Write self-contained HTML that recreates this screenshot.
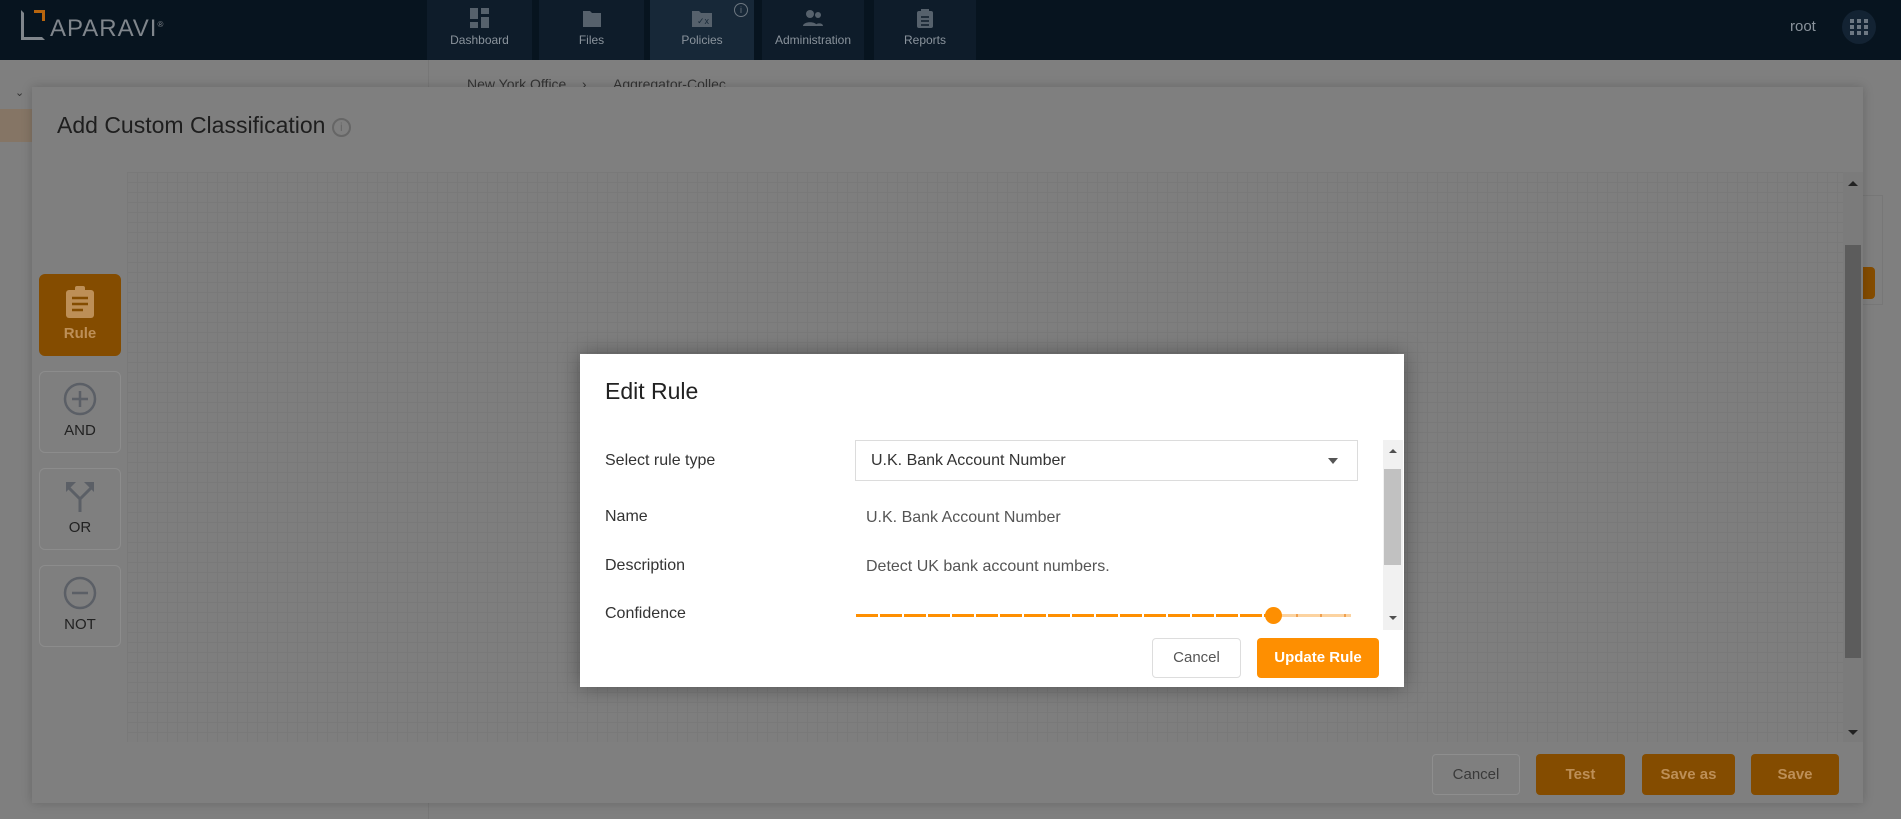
<!DOCTYPE html>
<html><head><meta charset="utf-8"><style>
*{box-sizing:border-box;margin:0;padding:0}
body{width:1901px;height:819px;overflow:hidden;position:relative;font-family:"Liberation Sans",sans-serif;background:#7f7f7f}
.abs{position:absolute}
.top{left:0;top:0;width:1901px;height:60px;background:#07141f}
.nav{top:0;height:60px;color:#8a939c;font-size:12px;text-align:center;background:#0e1c2a}
.nav svg{display:block;margin:8px auto 5px}
.grid{background-color:#7e7e7e;background-image:linear-gradient(#797979 1px,transparent 1px),linear-gradient(90deg,#797979 1px,transparent 1px);background-size:10px 10px}
.tb{left:39px;width:82px;height:82px;border:1px solid #8c8c8c;border-radius:6px;background:#7f7f7f;text-align:center;font-size:15px;color:#222}
.tb svg{display:block;margin:10px auto 6px}
.ob{background:#844c00;border-radius:4px;text-align:center;font-weight:bold;font-size:15px;line-height:41px;color:#bd8f57}
.lbl{left:605px;font-size:16px;color:#333;transform:translateY(-50%)}
.val{left:866px;font-size:16px;color:#555;transform:translateY(-50%)}
</style></head><body>
<div class="abs top"></div>
<div class="abs" style="left:21px;top:10px;width:24px;height:30px;border:3px solid #80868c;border-right-color:transparent;border-top-color:transparent"></div>
<div class="abs" style="left:34px;top:10px;width:11px;height:11px;border-top:3px solid #b8650e;border-right:3px solid #b8650e"></div>
<div class="abs" style="left:50px;top:15px;color:#80868c;font-size:24px;letter-spacing:1px">APARAVI<sup style="font-size:8px">®</sup></div>
<div class="abs nav" style="left:427px;width:105px"><svg width="20" height="20"><rect x="0" y="0" width="8" height="11" fill="#56616c"/><rect x="11" y="0" width="8" height="6" fill="#56616c"/><rect x="11" y="9" width="8" height="11" fill="#56616c"/><rect x="0" y="14" width="8" height="6" fill="#56616c"/></svg>Dashboard</div>
<div class="abs nav" style="left:539px;width:105px"><svg width="20" height="20"><path d="M1 3h7l2 2h9v14H1z" fill="#56616c"/></svg>Files</div>
<div class="abs nav" style="left:650px;width:104px;background:#172838"><svg width="22" height="20"><path d="M1 3h7l2 2h11v14H1z" fill="#56616c"/><text x="6" y="16" font-size="9" fill="#172838" font-family="Liberation Sans">✓x</text></svg>Policies</div>
<div class="abs" style="left:734px;top:3px;width:14px;height:14px;border:1px solid #6d7780;border-radius:50%;color:#6d7780;font-size:9px;text-align:center;line-height:12px">i</div>
<div class="abs nav" style="left:762px;width:102px"><svg width="22" height="20"><circle cx="8" cy="6" r="4" fill="#56616c"/><circle cx="16" cy="7" r="3" fill="#56616c"/><path d="M1 18c0-5 14-5 14 0zM13 18c0-3 8-4 8 0z" fill="#56616c"/></svg>Administration</div>
<div class="abs nav" style="left:874px;width:102px"><svg width="20" height="20"><rect x="2" y="3" width="16" height="17" rx="2" fill="#56616c"/><rect x="6" y="1" width="8" height="4" fill="#56616c"/><path d="M6 9h8M6 13h8M6 17h8" stroke="#0e1c2a" stroke-width="1.6"/></svg>Reports</div>
<div class="abs" style="left:1790px;top:18px;color:#8a939c;font-size:15px">root</div>
<div class="abs" style="left:1842px;top:10px;width:34px;height:34px;border-radius:50%;background:#132333"></div>
<svg class="abs" style="left:1850px;top:18px" width="18" height="18"><g fill="#6d7883"><rect x="0" y="1" width="4" height="4"/><rect x="7" y="1" width="4" height="4"/><rect x="14" y="1" width="4" height="4"/><rect x="0" y="7" width="4" height="4"/><rect x="7" y="7" width="4" height="4"/><rect x="14" y="7" width="4" height="4"/><rect x="0" y="13" width="4" height="4"/><rect x="7" y="13" width="4" height="4"/><rect x="14" y="13" width="4" height="4"/></g></svg>
<!-- background page -->
<div class="abs" style="left:428px;top:60px;width:1px;height:759px;background:#777"></div>
<div class="abs" style="left:0;top:109px;width:32px;height:33px;background:#857565"></div>
<div class="abs" style="left:15px;top:86px;color:#333;font-size:11px">⌄</div>
<div class="abs" style="left:467px;top:76px;color:#333;font-size:14px">New York Office &nbsp;&nbsp;&nbsp;›&nbsp;&nbsp;&nbsp;&nbsp;&nbsp;&nbsp; Aggregator-Collec</div>
<div class="abs" style="left:1863px;top:267px;width:12px;height:32px;background:#844c00;border-radius:0 4px 4px 0"></div>
<div class="abs" style="left:1863px;top:195px;width:20px;height:110px;border:1px solid #777;border-left:none"></div>
<!-- big modal -->
<div class="abs" style="left:32px;top:87px;width:1831px;height:716px;background:#7f7f7f;box-shadow:0 0 10px rgba(0,0,0,.2)"></div>
<div class="abs" style="left:57px;top:112px;font-size:23px;color:#1e1e1e">Add Custom Classification <span style="display:inline-block;width:19px;height:19px;border:2px solid #666;border-radius:50%;font-size:12px;text-align:center;line-height:15px;color:#666;vertical-align:2px">i</span></div>
<div class="abs grid" style="left:127px;top:172px;width:1716px;height:570px"></div>
<div class="abs" style="left:1843px;top:172px;width:20px;height:570px;background:#7b7b7b"></div>
<div class="abs" style="left:1845px;top:245px;width:16px;height:413px;background:#5c5c5c"></div>
<div class="abs" style="left:1848px;top:181px;border:5px solid transparent;border-bottom:5px solid #222;border-top:none"></div>
<div class="abs" style="left:1848px;top:730px;border:5px solid transparent;border-top:5px solid #222;border-bottom:none"></div>
<div class="abs tb" style="top:274px;background:#844c00;border-color:#844c00;color:#bd8f57;font-weight:bold">
<svg width="34" height="34"><rect x="3" y="5" width="28" height="28" rx="3" fill="#bd8f57"/><rect x="12" y="1" width="10" height="7" rx="2" fill="#bd8f57"/><path d="M9 13h16M9 19h16M9 25h11" stroke="#844c00" stroke-width="2.5"/></svg>Rule</div>
<div class="abs tb" style="top:371px"><svg width="34" height="34"><circle cx="17" cy="17" r="15" fill="none" stroke="#5b5f66" stroke-width="2.5"/><path d="M17 9v16M9 17h16" stroke="#5b5f66" stroke-width="2.5"/></svg>AND</div>
<div class="abs tb" style="top:468px"><svg width="34" height="34"><path d="M17 33V20L6 9M17 20L28 9" fill="none" stroke="#5b5f66" stroke-width="3"/><path d="M3 3h10l-10 10zM31 3H21l10 10z" fill="#5b5f66"/></svg>OR</div>
<div class="abs tb" style="top:565px"><svg width="34" height="34"><circle cx="17" cy="17" r="15" fill="none" stroke="#5b5f66" stroke-width="2.5"/><path d="M9 17h16" stroke="#5b5f66" stroke-width="2.5"/></svg>NOT</div>
<div class="abs" style="left:1432px;top:754px;width:88px;height:41px;border:1px solid #8e8e8e;border-radius:4px;text-align:center;line-height:39px;font-size:15px;color:#3a3a3a">Cancel</div>
<div class="abs ob" style="left:1536px;top:754px;width:89px;height:41px">Test</div>
<div class="abs ob" style="left:1642px;top:754px;width:93px;height:41px">Save as</div>
<div class="abs ob" style="left:1751px;top:754px;width:88px;height:41px">Save</div>
<!-- edit rule dialog -->
<div class="abs" style="left:580px;top:354px;width:824px;height:333px;background:#fff;box-shadow:0 0 20px rgba(0,0,0,.35)"></div>
<div class="abs" style="left:605px;top:378px;font-size:23px;color:#222">Edit Rule</div>
<div class="abs lbl" style="top:461px">Select rule type</div>
<div class="abs lbl" style="top:517px">Name</div>
<div class="abs lbl" style="top:566px">Description</div>
<div class="abs lbl" style="top:614px">Confidence</div>
<div class="abs" style="left:855px;top:440px;width:503px;height:41px;border:1px solid #dcdcdc"></div>
<div class="abs" style="left:871px;top:452px;font-size:16px;color:#333">U.K. Bank Account Number</div>
<div class="abs" style="left:1328px;top:458px;border:5px solid transparent;border-top:6px solid #555;border-bottom:none"></div>
<div class="abs val" style="top:518px">U.K. Bank Account Number</div>
<div class="abs val" style="top:567px">Detect UK bank account numbers.</div>
<div class="abs" style="left:856px;top:614px;width:418px;height:3px;background:repeating-linear-gradient(90deg,#fe8f01 0 22px,#fff 22px 24px)"></div>
<div class="abs" style="left:1274px;top:614px;width:77px;height:3px;background:repeating-linear-gradient(90deg,#fcd3a0 0 22px,#f0a050 22px 24px)"></div>
<div class="abs" style="left:1265px;top:607px;width:17px;height:17px;border-radius:50%;background:#fe8f01"></div>
<div class="abs" style="left:1383px;top:440px;width:20px;height:190px;background:#f1f1f1"></div>
<div class="abs" style="left:1384px;top:469px;width:17px;height:96px;background:#c1c1c1"></div>
<div class="abs" style="left:1389px;top:449px;border:4px solid transparent;border-bottom:4px solid #505050;border-top:none"></div>
<div class="abs" style="left:1389px;top:616px;border:4px solid transparent;border-top:4px solid #505050;border-bottom:none"></div>
<div class="abs" style="left:1152px;top:638px;width:89px;height:40px;border:1px solid #ddd;border-radius:4px;text-align:center;line-height:38px;font-size:15px;color:#555">Cancel</div>
<div class="abs" style="left:1257px;top:638px;width:122px;height:40px;background:#fe8f01;border-radius:4px;text-align:center;line-height:40px;font-size:15px;color:#fff;font-weight:bold">Update Rule</div>
</body></html>
